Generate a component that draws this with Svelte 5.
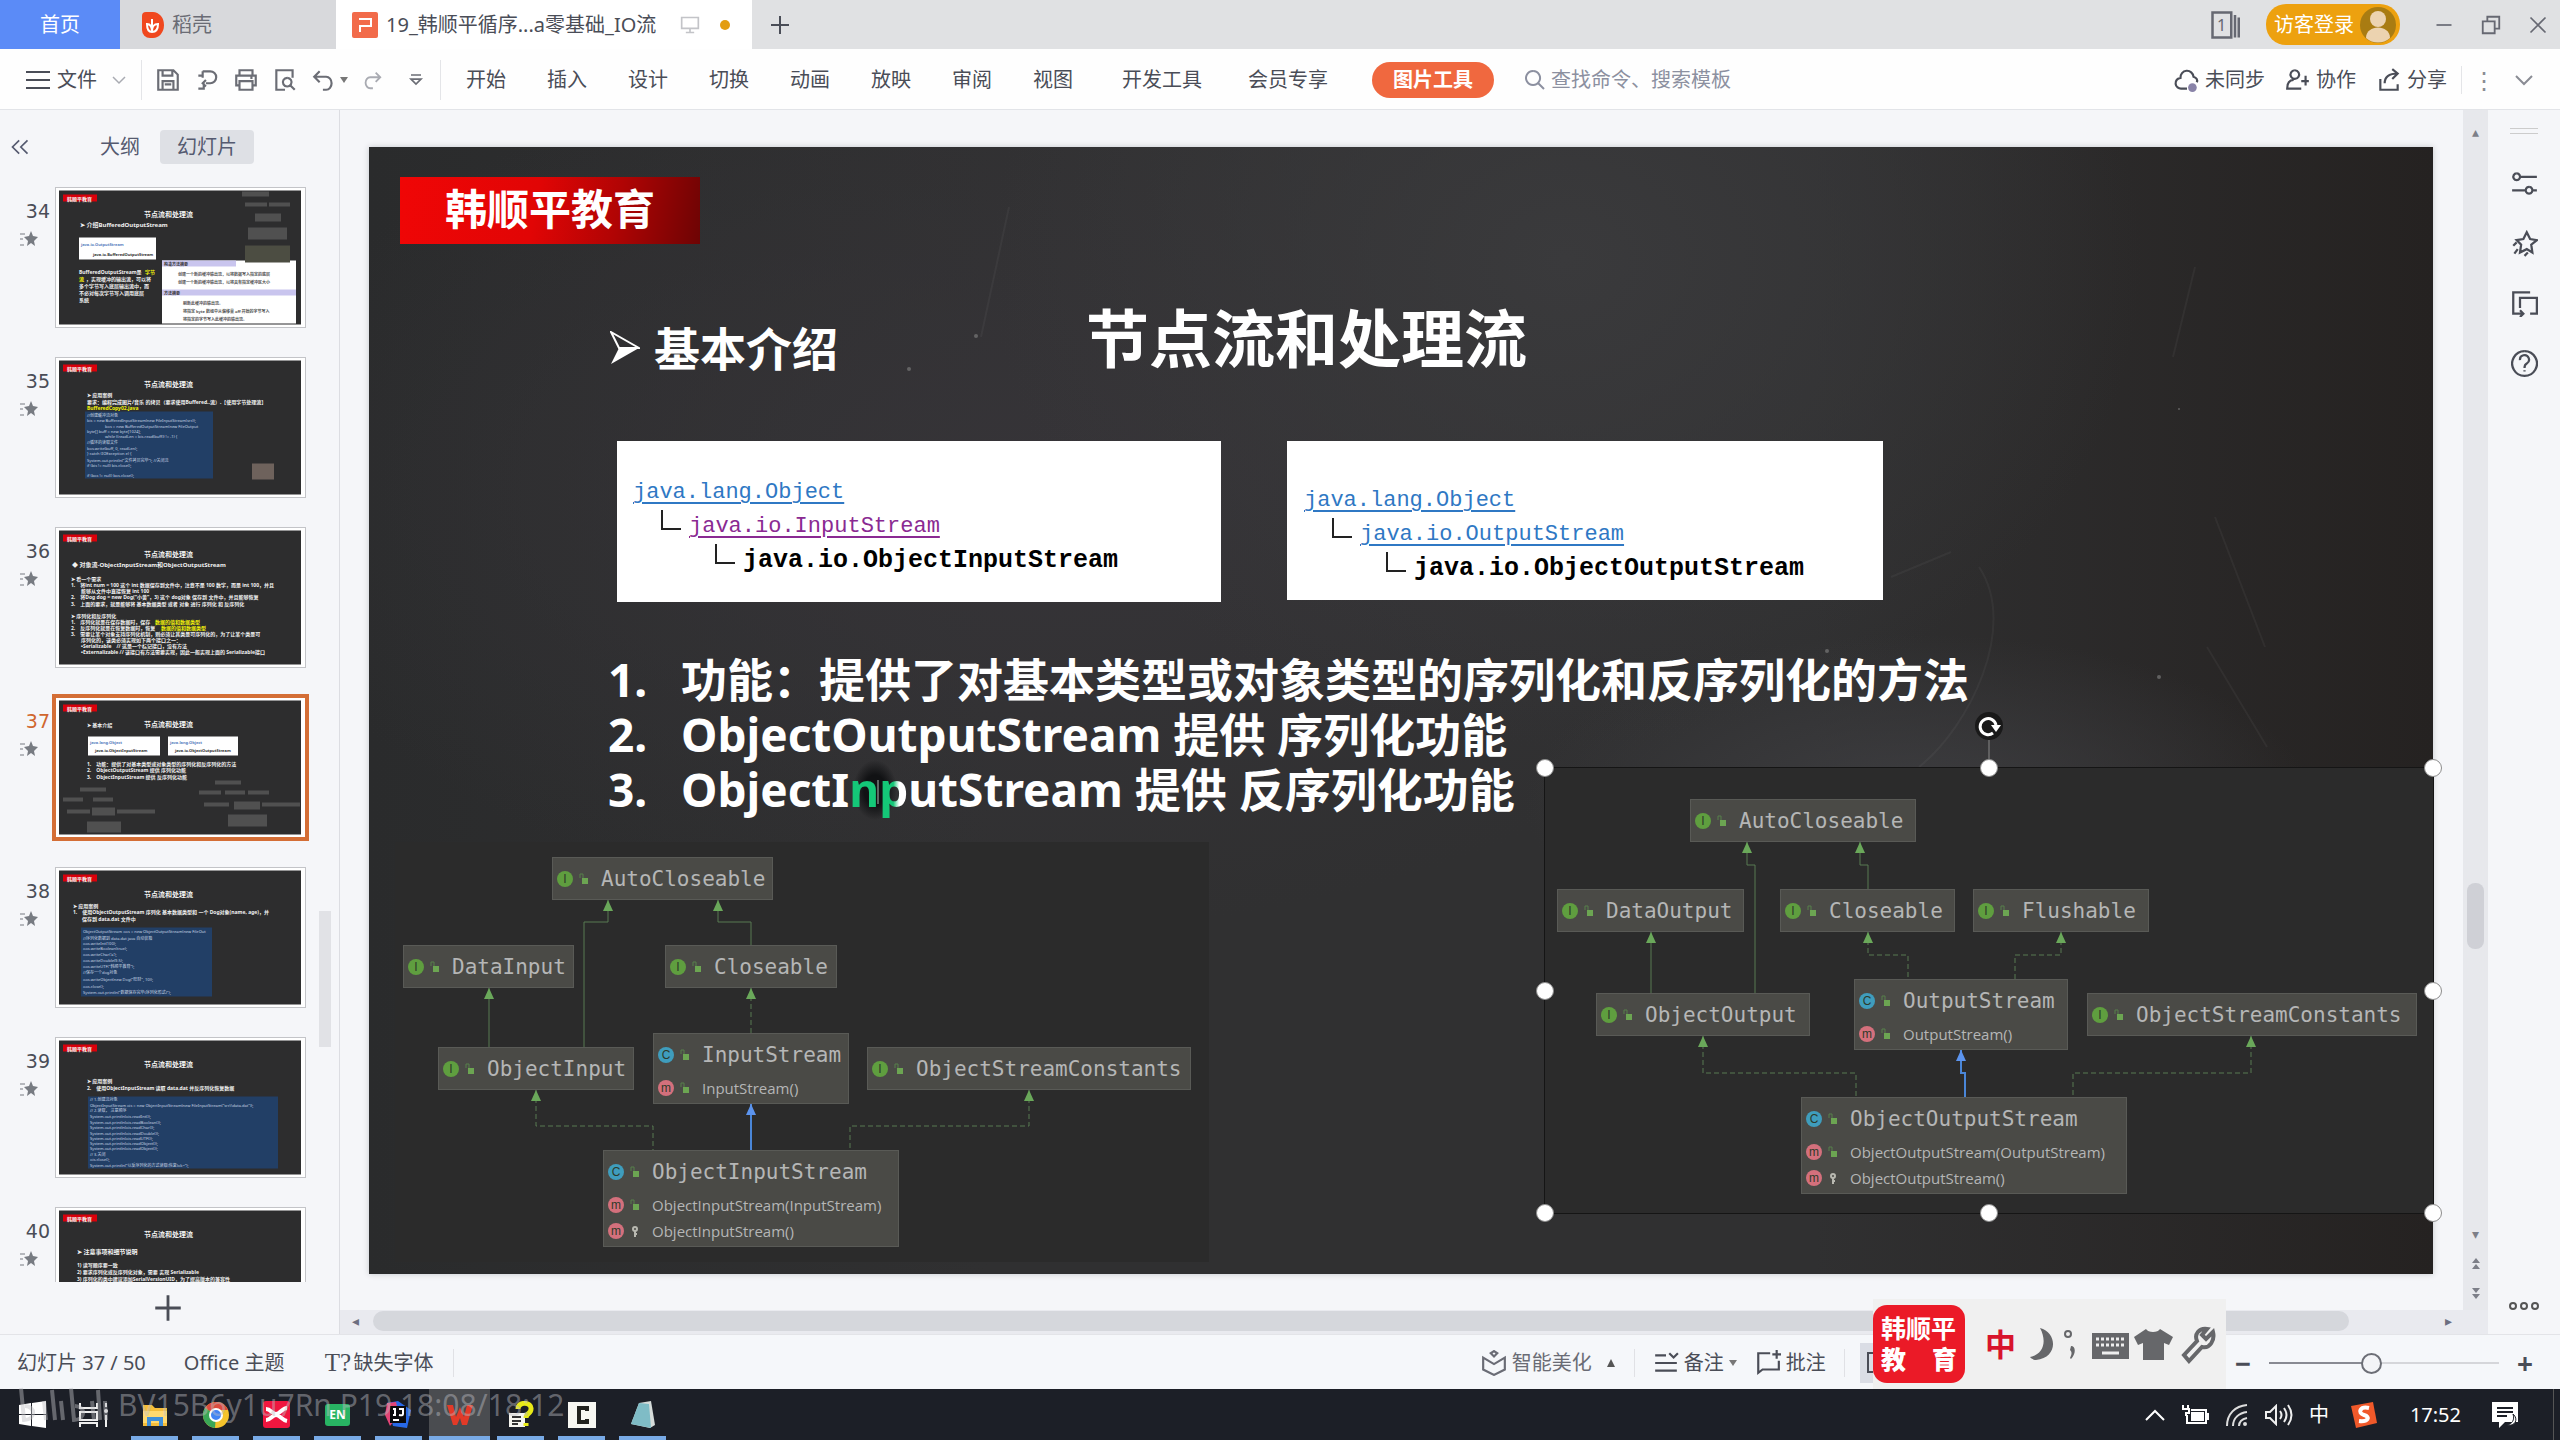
<script lang="ts">
    const menus = ['开始', '插入', '设计', '切换', '动画', '放映', '审阅', '视图'];
    const wideMenus = ['开发工具', '会员专享'];

    // Iconos de línea, rejilla de 24
    const icons: Record<string, string> = {
        save: 'M3 3h14l4 4v14H3zM7 3v5h9V3M7 21v-8h10v8M9 16h6',
        export: 'M8 4h7a5 5 0 0 1 0 11h-4M11 12l-3 3 3 3M8 4v6M4 8h4M4 20h5v-5',
        print: 'M6 8V3h12v5M6 17H3V8h18v9h-3M6 13h12v8H6zM16 10h2',
        preview: 'M12 21H4V3h15v7M21 21l-4-4M14 10a4 4 0 1 0 .1 0',
        undo: 'M8 4L3 9l5 5M3 9h11a5 6 0 0 1 0 12h-3',
        redo: 'M16 4l5 5-5 5M21 9H10a5 6 0 0 0 0 12h3',
        more: 'M6 6h12M6 11l6 6 6-6z',
        chevron: 'M4 8l8 8 8-8',
        search: 'M10 3a7 7 0 1 0 .1 0M15 15l6 6',
        cloud: 'M12 20H7a5 5 0 0 1-1-10 6 6 0 0 1 12-1c3 1 4 3 3 5',
        team: 'M9 3a4 4 0 1 0 .1 0M8 12c-4 0-6 3-6 8h13M19 8v9M15 13h7',
        share: 'M4 11v10h16v-5M8 15c0-6 4-9 12-9M15 2l5 4-5 5',
        monitor: 'M2 3h20v13H2zM12 16v5M7 21h10',
        plus: 'M12 3v18M3 12h18',
        close: 'M3 3l18 18M21 3L3 21',
        minimize: 'M3 12h18',
        restore: 'M3 8h13v13H3zM8 8V3h13v13h-5',
        pages: 'M2 2h15v20H2zM20 4v18M23 6v16',
        collapse: 'M11 4l-8 8 8 8M21 4l-8 8 8 8',
        beautify: 'M12 6l3-3-3-2-3 2zM2 7v11l10 5 10-5V7l-10 6z',
        notes: 'M2 5h10M2 12h20M2 19h20M15 3l4 4 4-4',
        comment: 'M14 3H3v18l4-3h15v-8M20 0v8M16 4h8',
        sliders: 'M5 3a3 3 0 1 0 .1 0M8 6h15M1 18h12M16 15a3 3 0 1 0 .1 0M19 18h4',
        star: 'M14 2l3 6 6 1-5 4 1 7-5-3-6 3 1-7-4-4 6-1zM5 11l-3 3M6 17l-3 4M15 20l-3 3',
        layers: 'M17 2H2v19h9M8 16V7h15v14h-6M8 18l3 3-3 3',
        help: 'M12 1a11 11 0 1 0 .1 0M8 9a4 4 0 1 1 6 3c-2 1-2 2-2 4M12 18v1'
    };

    const rail = ['sliders', 'star', 'layers', 'help'];

    const kinds: Record<string, { letter: string; color: string }> = {
        i: { letter: 'I', color: '#5f9e3f' },
        c: { letter: 'C', color: '#3f9dbd' },
        m: { letter: 'm', color: '#d4707c' }
    };

    // x e y relativos al diagrama
    const inputNodes = [
        { x: 157, y: 15, w: 221, kind: 'i', name: 'AutoCloseable', methods: [] },
        { x: 8, y: 103, w: 171, kind: 'i', name: 'DataInput', methods: [] },
        { x: 270, y: 103, w: 172, kind: 'i', name: 'Closeable', methods: [] },
        { x: 43, y: 205, w: 196, kind: 'i', name: 'ObjectInput', methods: [] },
        { x: 258, y: 191, w: 196, kind: 'c', name: 'InputStream', methods: ['InputStream()'] },
        { x: 472, y: 205, w: 324, kind: 'i', name: 'ObjectStreamConstants', methods: [] },
        { x: 208, y: 308, w: 296, kind: 'c', name: 'ObjectInputStream', methods: ['ObjectInputStream(InputStream)', 'ObjectInputStream()'] }
    ];
    const inputEdges = [
        { d: 'M213 58V80H189V205', kind: 'solid' },
        { d: 'M323 58V80H356V103', kind: 'solid' },
        { d: 'M94 146V205', kind: 'solid' },
        { d: 'M356 146V191', kind: 'dashed' },
        { d: 'M141 248V284H258V308', kind: 'dashed' },
        { d: 'M634 248V284H455V308', kind: 'dashed' },
        { d: 'M356 262V308', kind: 'extends' }
    ];

    const outputNodes = [
        { x: 145, y: 31, w: 226, kind: 'i', name: 'AutoCloseable', methods: [] },
        { x: 12, y: 121, w: 187, kind: 'i', name: 'DataOutput', methods: [] },
        { x: 235, y: 121, w: 175, kind: 'i', name: 'Closeable', methods: [] },
        { x: 428, y: 121, w: 176, kind: 'i', name: 'Flushable', methods: [] },
        { x: 51, y: 225, w: 214, kind: 'i', name: 'ObjectOutput', methods: [] },
        { x: 309, y: 211, w: 214, kind: 'c', name: 'OutputStream', methods: ['OutputStream()'] },
        { x: 542, y: 225, w: 330, kind: 'i', name: 'ObjectStreamConstants', methods: [] },
        { x: 256, y: 329, w: 326, kind: 'c', name: 'ObjectOutputStream', methods: ['ObjectOutputStream(OutputStream)', 'ObjectOutputStream()'] }
    ];
    const outputEdges = [
        { d: 'M202 74V97H210V225', kind: 'solid' },
        { d: 'M315 74V97H323V121', kind: 'solid' },
        { d: 'M106 164V225', kind: 'solid' },
        { d: 'M323 164V187H363V211', kind: 'dashed' },
        { d: 'M516 164V187H470V211', kind: 'dashed' },
        { d: 'M158 268V305H311V329', kind: 'dashed' },
        { d: 'M706 268V305H528V329', kind: 'dashed' },
        { d: 'M416 282V305H420V329', kind: 'extends' }
    ];

    const handles = [
        [0, 0], [50, 0], [100, 0],
        [0, 50], [100, 50],
        [0, 100], [50, 100], [100, 100]
    ];

    type Line = { x: number; y: number; t: string; s?: number; c?: string };
    type Thumb = { n: number; lines: Line[]; panels?: [number, number, number, number, string][]; code?: Line[] };

    const y = '#f2f20a';
    const blue = '#223f66';
    const grey = '#505050';

    const thumbs: Thumb[] = [
        {
            n: 34,
            panels: [
                [20, 47, 77, 22, '#fff'], [103, 70, 134, 63, '#fff'], [103, 70, 74, 6, '#c9c5ee'], [103, 99, 134, 6, '#c9c5ee'],
                [183, 1, 27, 5, grey], [186, 12, 22, 4, grey], [210, 12, 21, 4, grey], [196, 23, 26, 8, grey], [189, 37, 39, 12, grey], [186, 55, 45, 17, '#4c4d42']
            ],
            lines: [
                { x: 21, y: 36, t: '➤ 介绍BufferedOutputStream', s: 6 },
                { x: 22, y: 55, t: 'java.io.OutputStream', s: 4, c: '#5b7fc0' },
                { x: 34, y: 65, t: 'java.io.BufferedOutputStream', s: 4, c: '#333' },
                { x: 20, y: 83, t: 'BufferedOutputStream是', s: 5 },
                { x: 86, y: 83, t: '字节', s: 5, c: y },
                { x: 20, y: 90, t: '流', s: 5, c: y },
                { x: 27, y: 90, t: '，实现缓冲的输出流，可以将', s: 5 },
                { x: 20, y: 97, t: '多个字节写入底层输出流中，而', s: 5 },
                { x: 20, y: 104, t: '不必对每次字节写入调用底层', s: 5 },
                { x: 20, y: 111, t: '系统', s: 5 },
                { x: 105, y: 75, t: '构造方法摘要', s: 4, c: '#333' },
                { x: 119, y: 85, t: '创建一个新的缓冲输出流，以将数据写入指定的底层', s: 4, c: '#555' },
                { x: 119, y: 93, t: '创建一个新的缓冲输出流，以将具有指定缓冲区大小', s: 4, c: '#555' },
                { x: 105, y: 104, t: '方法摘要', s: 4, c: '#333' },
                { x: 124, y: 114, t: '刷新此缓冲的输出流。', s: 4, c: '#555' },
                { x: 124, y: 122, t: '将指定 byte 数组中从偏移量 off 开始的字节写入', s: 4, c: '#555' },
                { x: 124, y: 130, t: '将指定的字节写入此缓冲的输出流。', s: 4, c: '#555' }
            ]
        },
        {
            n: 35,
            panels: [[26, 51, 128, 67, blue], [193, 103, 22, 16, '#6e625c']],
            lines: [
                { x: 28, y: 36, t: '➤ 应用案例', s: 5 },
                { x: 28, y: 43, t: '要求：编程完成图片/音乐 的拷贝（要求使用Buffered..流）.【使用字节处理流】', s: 5 },
                { x: 28, y: 49, t: 'BufferedCopy02.java', s: 5, c: y }
            ],
            code: [
                { x: 28, y: 56, t: '//创建缓冲流对象' },
                { x: 28, y: 61, t: 'bis = new BufferedInputStream(new FileInputStream(src));' },
                { x: 46, y: 67, t: 'bos = new BufferedOutputStream(new FileOutput' },
                { x: 28, y: 72, t: 'byte[] buff = new byte[1024];' },
                { x: 46, y: 77, t: 'while ((readLen = bis.read(buff)) != -1) {' },
                { x: 28, y: 83, t: '//循环的读取文件' },
                { x: 28, y: 89, t: 'bos.write(buff, 0, readLen);' },
                { x: 28, y: 94, t: '} catch (IOException e) {' },
                { x: 28, y: 101, t: 'System.out.println("文件拷贝完毕"); //关闭流' },
                { x: 28, y: 106, t: 'if (bis != null) bis.close();' },
                { x: 28, y: 116, t: 'if (bos != null) bos.close();' }
            ]
        },
        {
            n: 36,
            lines: [
                { x: 13, y: 36, t: '◆ 对象流-ObjectInputStream和ObjectOutputStream', s: 6 },
                { x: 12, y: 50, t: '➤ 看一个需求', s: 5 },
                { x: 12, y: 56, t: '1.　将int num = 100 这个 int 数据保存到文件中，注意不是 100 数字，而是 int 100，并且', s: 5 },
                { x: 22, y: 62, t: '能够从文件中直接恢复 int 100', s: 5 },
                { x: 12, y: 68, t: '2.　将Dog dog = new Dog(“小黄”，3) 这个 dog对象 保存到 文件中，并且能够恢复', s: 5 },
                { x: 12, y: 75, t: '3.　上面的要求，就是能够将 基本数据类型 或者 对象 进行 序列化 和 反序列化', s: 5 },
                { x: 12, y: 87, t: '➤ 序列化和反序列化', s: 5 },
                { x: 12, y: 93, t: '1.　序列化就是在保存数据时，保存', s: 5 },
                { x: 96, y: 93, t: '数据的值和数据类型', s: 5, c: y },
                { x: 12, y: 99, t: '2.　反序列化就是在恢复数据时，恢复', s: 5 },
                { x: 102, y: 99, t: '数据的值和数据类型', s: 5, c: y },
                { x: 12, y: 105, t: '3.　需要让某个对象支持序列化机制，则必须让其类是可序列化的，为了让某个类是可', s: 5 },
                { x: 22, y: 111, t: '序列化的，该类必须实现如下两个接口之一：', s: 5 },
                { x: 22, y: 117, t: '•Serializable　// 这是一个标记接口，没有方法', s: 5 },
                { x: 22, y: 123, t: '•Externalizable // 该接口有方法需要实现，因此一般实现上面的 Serializable接口', s: 5 }
            ]
        },
        {
            n: 37,
            panels: [
                [29, 36, 72, 19, '#fff'], [109, 36, 70, 19, '#fff'],
                [21, 87, 26, 4, grey], [4, 97, 20, 4, grey], [34, 97, 20, 4, grey], [8, 109, 23, 4, grey], [33, 107, 23, 8, grey], [58, 109, 38, 4, grey], [28, 121, 34, 11, grey],
                [156, 80, 26, 4, grey], [140, 90, 22, 4, grey], [166, 90, 20, 4, grey], [189, 90, 21, 4, grey], [145, 102, 25, 4, grey], [175, 101, 26, 8, grey], [203, 102, 38, 4, grey], [169, 114, 39, 12, grey]
            ],
            lines: [
                { x: 28, y: 26, t: '➤ 基本介绍', s: 5 },
                { x: 31, y: 43, t: 'java.lang.Object', s: 4, c: '#5b7fc0' },
                { x: 36, y: 51, t: 'java.io.ObjectInputStream', s: 4, c: '#333' },
                { x: 111, y: 43, t: 'java.lang.Object', s: 4, c: '#5b7fc0' },
                { x: 116, y: 51, t: 'java.io.ObjectOutputStream', s: 4, c: '#333' },
                { x: 28, y: 65, t: '1.　功能：提供了对基本类型或对象类型的序列化和反序列化的方法', s: 5 },
                { x: 28, y: 71, t: '2.　ObjectOutputStream 提供 序列化功能', s: 5 },
                { x: 28, y: 78, t: '3.　ObjectInputStream 提供 反序列化功能', s: 5 }
            ]
        },
        {
            n: 38,
            panels: [[22, 57, 131, 69, blue]],
            lines: [
                { x: 14, y: 37, t: '➤ 应用案例', s: 5 },
                { x: 14, y: 43, t: '1.　使用ObjectOutputStream 序列化 基本数据类型和 一个 Dog对象(name, age)，并', s: 5 },
                { x: 23, y: 50, t: '保存到 data.dat 文件中', s: 5 }
            ],
            code: [
                { x: 24, y: 62, t: 'ObjectOutputStream oos = new ObjectOutputStream(new FileOut' },
                { x: 24, y: 69, t: '//序列化数据到 data.dat   java 自动装箱' },
                { x: 24, y: 74, t: 'oos.writeInt(100);' },
                { x: 24, y: 79, t: 'oos.writeBoolean(true);' },
                { x: 24, y: 85, t: 'oos.writeChar(\'a\');' },
                { x: 24, y: 91, t: 'oos.writeDouble(9.5);' },
                { x: 24, y: 97, t: 'oos.writeUTF("韩顺平教育");' },
                { x: 24, y: 103, t: '//保存一个dog对象' },
                { x: 24, y: 110, t: 'oos.writeObject(new Dog("旺财", 10));' },
                { x: 24, y: 117, t: 'oos.close();' },
                { x: 24, y: 123, t: 'System.out.println("数据保存完毕(序列化形式)");' }
            ]
        },
        {
            n: 39,
            panels: [[29, 56, 190, 72, blue]],
            lines: [
                { x: 28, y: 42, t: '➤ 应用案例', s: 5 },
                { x: 28, y: 49, t: '2.　使用ObjectInputStream 读取 data.dat 并反序列化恢复数据', s: 5 }
            ],
            code: [
                { x: 31, y: 60, t: '// 1.创建流对象' },
                { x: 31, y: 66, t: 'ObjectInputStream ois = new ObjectInputStream(new FileInputStream("src\\\\data.dat"));' },
                { x: 31, y: 71, t: '// 2.读取， 注意顺序' },
                { x: 31, y: 77, t: 'System.out.println(ois.readInt());' },
                { x: 31, y: 83, t: 'System.out.println(ois.readBoolean());' },
                { x: 31, y: 88, t: 'System.out.println(ois.readChar());' },
                { x: 31, y: 94, t: 'System.out.println(ois.readDouble());' },
                { x: 31, y: 99, t: 'System.out.println(ois.readUTF());' },
                { x: 31, y: 104, t: 'System.out.println(ois.readObject());' },
                { x: 31, y: 109, t: 'System.out.println(ois.readObject());' },
                { x: 31, y: 115, t: '// 3.关闭' },
                { x: 31, y: 120, t: 'ois.close();' },
                { x: 31, y: 126, t: 'System.out.println("以反序列化的方式读取(恢复)ok~");' }
            ]
        },
        {
            n: 40,
            lines: [
                { x: 18, y: 43, t: '➤ 注意事项和细节说明', s: 6 },
                { x: 18, y: 56, t: '1)  读写顺序要一致', s: 5 },
                { x: 18, y: 63, t: '2)  要求序列化或反序列化对象，需要 实现 Serializable', s: 5 },
                { x: 18, y: 70, t: '3)  序列化的类中建议添加SerialVersionUID，为了提高版本的兼容性', s: 5 }
            ]
        }
    ];

    let current = $state(37);
    let zoom = $state(44);
</script>

{#snippet icon(name: string, size: number)}
    <svg class="icon" width={size} height={size} viewBox="0 0 24 24" aria-hidden="true"><path d={icons[name]} /></svg>
{/snippet}

{#snippet badge(kind: string)}
    <span class="kind" style="background: {kinds[kind].color}">{kinds[kind].letter}</span>
{/snippet}

{#snippet lock()}
    <svg width="10" height="12" viewBox="0 0 10 12" aria-hidden="true">
        <path d="M1 5V1h3v5" fill="none" stroke="#56804a" />
        <path d="M3 5h6v6H3z" fill="#6ca552" />
    </svg>
{/snippet}

{#snippet key()}
    <svg width="10" height="12" viewBox="0 0 10 12" aria-hidden="true">
        <path d="M5 6v6M5 9h2" fill="none" stroke="#b8b8b0" stroke-width="2" />
        <circle cx="5" cy="4" r="2" fill="none" stroke="#b8b8b0" stroke-width="2" />
    </svg>
{/snippet}

{#snippet diagram(nodes: typeof inputNodes, edges: typeof inputEdges)}
    <svg class="edges" aria-hidden="true">
        <defs>
            <marker id="tip" viewBox="0 0 12 12" refX="6" refY="0" markerWidth="12" markerHeight="12" markerUnits="userSpaceOnUse" orient="0"><path d="M6 0l5 11H1z" fill="#6aa85a" /></marker>
            <marker id="tip-blue" viewBox="0 0 12 12" refX="6" refY="0" markerWidth="12" markerHeight="12" markerUnits="userSpaceOnUse" orient="0"><path d="M6 0l5 11H1z" fill="#5c94ee" /></marker>
        </defs>
        {#each edges as edge}
            <path class={edge.kind} d={edge.d} marker-start={edge.kind === 'extends' ? 'url(#tip-blue)' : 'url(#tip)'} />
        {/each}
    </svg>
    {#each nodes as node}
        <div class="node" style="left: {node.x}px; top: {node.y}px; width: {node.w}px;">
            <div class="node-name">{@render badge(node.kind)}{@render lock()}<span>{node.name}</span></div>
            {#if node.methods.length}
                <div class="methods">
                    {#each node.methods as method, i}
                        <div class="method">
                            {@render badge('m')}
                            {#if i === 0}{@render lock()}{:else}{@render key()}{/if}
                            <span>{method}</span>
                        </div>
                    {/each}
                </div>
            {/if}
        </div>
    {/each}
{/snippet}

<div class="app">
    <header class="tabs">
        <button class="tab home">首页</button>
        <button class="tab docer">
            <svg width="22" height="26" viewBox="0 0 22 26" aria-hidden="true"><path d="M4 0h7a11 13 0 0 1 0 26H8a8 8 0 0 1-8-8V4a4 4 0 0 1 4-4z" fill="#f0481f" /><path d="M10 20V7M10 20c-5 0-5-5-5-8 4 0 5 3 5 8c0-5 1-8 6-8 0 4-1 8-6 8" fill="none" stroke="#fff" stroke-width="2" /></svg>
            稻壳
        </button>
        <button class="tab doc">
            <svg width="26" height="26" viewBox="0 0 26 26" aria-hidden="true"><rect width="26" height="26" rx="2" fill="#f26b4a" /><path d="M7 7h12v7H9M8 13v7" fill="none" stroke="#fff" stroke-width="2" /></svg>
            <span class="doc-name">19_韩顺平循序...a零基础_IO流</span>
            <span class="doc-screen">{@render icon('monitor', 20)}</span>
            <i class="unsaved"></i>
        </button>
        <button class="add" aria-label="新建">{@render icon('plus', 24)}</button>
        <div class="window">
            <button class="pages" aria-label="窗口">{@render icon('pages', 30)}<span>1</span></button>
            <button class="login">
                访客登录
                <svg width="36" height="36" viewBox="0 0 36 36" aria-hidden="true"><circle cx="18" cy="18" r="18" fill="#a97c12" /><circle cx="18" cy="12" r="8" fill="#ecd3b0" /><path d="M6 31c0-14 24-14 24 0a18 18 0 0 1-24 0" fill="#ecd3b0" /></svg>
            </button>
            <button aria-label="最小化">{@render icon('minimize', 20)}</button>
            <button aria-label="还原">{@render icon('restore', 22)}</button>
            <button aria-label="关闭">{@render icon('close', 20)}</button>
        </div>
    </header>

    <nav class="ribbon">
        <button class="file">
            <svg class="icon" width="24" height="18" viewBox="0 0 24 18" aria-hidden="true"><path d="M0 1h24M0 9h24M0 17h24" /></svg>
            文件
            <span class="dim">{@render icon('chevron', 18)}</span>
        </button>
        <div class="quick">
            {#each ['save', 'export', 'print', 'preview', 'undo'] as name}
                <button aria-label={name}>{@render icon(name, 26)}</button>
            {/each}
            <span class="caret"></span>
            <button class="dim" aria-label="redo">{@render icon('redo', 22)}</button>
            <button class="more" aria-label="more">{@render icon('more', 20)}</button>
        </div>
        <div class="menus">
            {#each menus as menu}<button>{menu}</button>{/each}
        </div>
        <div class="menus wide">
            {#each wideMenus as menu}<button>{menu}</button>{/each}
        </div>
        <button class="picture-tools">图片工具</button>
        <label class="search">
            {@render icon('search', 24)}
            <input type="text" placeholder="查找命令、搜索模板" aria-label="查找命令、搜索模板" />
        </label>
        <div class="share">
            <button>
                <svg class="icon" width="26" height="26" viewBox="0 0 24 24" aria-hidden="true"><path d={icons.cloud} /><circle cx="17" cy="19" r="4" fill="#8983a8" stroke="none" /></svg>
                未同步
            </button>
            <button>{@render icon('team', 26)}协作</button>
            <button>{@render icon('share', 26)}分享</button>
            <div class="share-end">
                <button class="dots" aria-label="更多">⋮</button>
                <button aria-label="折叠">{@render icon('chevron', 24)}</button>
            </div>
        </div>
    </nav>

    <main>
        <aside class="panel">
            <div class="panel-head">
                <button aria-label="收起">{@render icon('collapse', 20)}</button>
                <button class="switch outline">大纲</button>
                <button class="switch on">幻灯片</button>
            </div>
            <div class="thumbs">
                {#each thumbs as thumb}
                    <button class="thumb" class:selected={thumb.n === current} onclick={() => (current = thumb.n)}>
                        <span class="num">
                            {thumb.n}
                            <svg width="18" height="16" viewBox="0 0 18 16" aria-hidden="true"><path d="M11 0l2 5 5 1-4 4 1 5-4-3-4 3 1-5-4-4 5-1z" fill="#777b82" /><path d="M0 3h5M0 8h3M0 14h4" stroke="#777b82" /></svg>
                        </span>
                        <span class="frame">
                            <svg class="mini" viewBox="0 0 242 134" aria-hidden="true">
                                <rect width="242" height="134" fill="#2d2d2e" />
                                <path d="M4 4h34v7H4z" fill="#d9000b" />
                                {#each thumb.panels ?? [] as [px, py, pw, ph, fill]}
                                    <rect x={px} y={py} width={pw} height={ph} {fill} />
                                {/each}
                                <text x="8" y="10" font-size="5">韩顺平教育</text>
                                <text x="85" y="26" font-size="7">节点流和处理流</text>
                                {#each thumb.lines as line}
                                    <text x={line.x} y={line.y} font-size={line.s ?? 5} fill={line.c ?? '#f2f2f2'}>{line.t}</text>
                                {/each}
                                {#each thumb.code ?? [] as line}
                                    <text class="code" x={line.x} y={line.y} font-size="4">{line.t}</text>
                                {/each}
                            </svg>
                        </span>
                    </button>
                {/each}
                <i class="panel-scroll"></i>
            </div>
            <button class="add-slide" aria-label="新建幻灯片">{@render icon('plus', 34)}</button>
        </aside>

        <section class="work">
            <div class="work-row">
                <div class="stage">
                    <article class="slide">
                        <svg class="chalk" preserveAspectRatio="none" viewBox="0 0 2064 1127" aria-hidden="true">
                            <path d="M1826 120l-22 90M1846 370l50 130M1838 500l60 100M1522 430l60-25M1910 700l60-40M640 60l-28 130M1610 420c40 60-10 160-60 200M1380 760l80 20M1500 810l-50 60" />
                            <circle cx="607" cy="189" r="2" /><circle cx="540" cy="222" r="2" /><circle cx="1810" cy="262" r="1" /><circle cx="1458" cy="504" r="2" /><circle cx="1790" cy="530" r="2" />
                        </svg>
                        <div class="brand">韩顺平教育</div>
                        <div class="headings">
                            <h2>
                                <svg width="30" height="34" viewBox="0 0 30 34" aria-hidden="true"><path d="M1 1l28 16H9z" fill="none" stroke="#fff" stroke-width="2" /><path d="M9 17h20L1 33z" fill="#fff" /></svg>
                                基本介绍
                            </h2>
                            <h1>节点流和处理流</h1>
                        </div>
                        <div class="trees">
                            <div class="tree">
                                <div><a href="#object">java.lang.Object</a></div>
                                <div class="level1"><i class="corner"></i><a class="visited" href="#input">java.io.InputStream</a></div>
                                <div class="level2"><i class="corner"></i><b>java.io.ObjectInputStream</b></div>
                            </div>
                            <div class="tree second">
                                <div><a href="#object">java.lang.Object</a></div>
                                <div class="level1"><i class="corner"></i><a href="#output">java.io.OutputStream</a></div>
                                <div class="level2"><i class="corner"></i><b>java.io.ObjectOutputStream</b></div>
                            </div>
                        </div>
                        <ol>
                            <li><span>1.</span>功能：提供了对基本类型或对象类型的序列化和反序列化的方法</li>
                            <li><span>2.</span>ObjectOutputStream 提供 序列化功能</li>
                            <li><span>3.</span>ObjectI<em>np</em>utStream 提供 反序列化功能</li>
                        </ol>
                        <div class="diagram input">{@render diagram(inputNodes, inputEdges)}</div>
                        <div class="diagram output">
                            {@render diagram(outputNodes, outputEdges)}
                            <svg class="rotate" width="32" height="60" viewBox="0 0 32 60" aria-hidden="true"><circle cx="16" cy="18" r="14" fill="#191919" /><path d="M16 32v28" stroke="#888" /><path d="M20 25a8 8 0 1 1 3-8" fill="none" stroke="#fff" stroke-width="3" /><path d="M18 17h10l-5 7z" fill="#fff" /></svg>
                            {#each handles as [hx, hy]}
                                <i class="handle" style="left: {hx}%; top: {hy}%;"></i>
                            {/each}
                        </div>
                    </article>
                </div>
                <div class="vscroll">
                    <span>▴</span>
                    <i></i>
                    <span class="down">▾</span>
                    <svg width="10" height="12" viewBox="0 0 10 12" fill="#7d7f88" aria-hidden="true"><path d="M5 0l4 5H1zM5 6l4 5H1z" /></svg>
                    <svg width="10" height="12" viewBox="0 0 10 12" fill="#7d7f88" aria-hidden="true"><path d="M1 0h8L5 5zM1 6h8l-4 5z" /></svg>
                </div>
            </div>
            <div class="hscroll"><span>◂</span><i></i><span>▸</span></div>
        </section>

        <aside class="rail">
            <i class="grip"></i>
            {#each rail as name}
                <button aria-label={name}>{@render icon(name, 27)}</button>
            {/each}
            <button class="rail-more" aria-label="更多"><i></i><i></i><i></i></button>
        </aside>
    </main>

    <footer class="status">
        <span>幻灯片 37 / 50</span>
        <span class="theme">Office 主题</span>
        <button class="fonts"><span class="serif">T?</span>缺失字体</button>
        <div class="status-right">
            <button class="beautify">{@render icon('beautify', 26)}智能美化 <span class="caret up"></span></button>
            <button>{@render icon('notes', 26)}备注<span class="caret"></span></button>
            <button class="comments">{@render icon('comment', 26)}批注</button>
            <button class="view" aria-label="普通视图">{@render icon('layers', 24)}</button>
            <span class="zoom-sign">−</span>
            <input type="range" min="0" max="100" bind:value={zoom} aria-label="缩放" />
            <span class="zoom-sign">+</span>
        </div>
        <div class="ime">
            <div class="ime-logo"><span>韩顺平</span><span class="spread"><b>教</b><b>育</b></span></div>
            <span class="ime-mode">中</span>
            <svg width="196" height="40" viewBox="0 0 196 40" fill="#66676a" aria-hidden="true">
                <path d="M10 4c18 5 18 30-4 32-3 0-5-2-6-3 14-3 17-16 10-29z" />
                <circle cx="38" cy="10" r="3" fill="none" stroke="#66676a" stroke-width="2" /><path d="M41 22c5 0 5 8 0 13l-1-1c2-4 2-6 0-8z" />
                <path d="M62 9h37v26H62z" />
                <path d="M66 15h29M66 21h29" stroke="#eee" stroke-width="3" stroke-dasharray="3 2" /><path d="M72 29h17" stroke="#eee" stroke-width="3" />
                <path d="M116 5c2 4 12 4 14 0l13 8-4 8-5-2v17h-21V19l-5 2-4-8z" />
                <path d="M183 8l-7 7-4-4 5-6c-8-1-13 5-10 12l-13 14 5 6 13-14c8 2 13-7 11-15z" fill="none" stroke="#66676a" stroke-width="4" />
            </svg>
        </div>
    </footer>

    <div class="taskbar">
        <button class="app-btn plain" aria-label="开始"><svg width="27" height="27" viewBox="0 0 27 27" aria-hidden="true"><path d="M0 4l12-2v11H0zM13 2l14-2v13H13zM0 14h12v11L0 23zM13 14h14v13l-14-2z" fill="#fff" /></svg></button>
        <button class="app-btn plain" aria-label="任务视图"><svg width="30" height="26" viewBox="0 0 30 26" fill="none" stroke="#eee" stroke-width="2" aria-hidden="true"><path d="M1 1v5h17V1M1 10h17v8H1zM1 25v-4h17v4M27 1v4M27 13v12" /><circle cx="27" cy="9" r="1" /></svg></button>
        <button class="app-btn" aria-label="文件资源管理器"><svg width="26" height="26" viewBox="0 0 26 26" aria-hidden="true"><path d="M1 3h9l3 3h12v18H1z" fill="#f5bd3a" /><path d="M1 9h24v12H1z" fill="#ffd970" /><path d="M5 24v-9h16v9h-4v-5H9v5z" fill="#3f8fda" /></svg></button>
        <button class="app-btn" aria-label="Chrome"><svg width="28" height="28" viewBox="0 0 28 28" aria-hidden="true"><circle cx="14" cy="14" r="13" fill="#f5c32c" /><path d="M14 14L3 7a13 13 0 0 1 23 2H14z" fill="#dd4b3e" /><path d="M14 14l-1 13A13 13 0 0 1 3 7z" fill="#3aa757" /><circle cx="14" cy="14" r="6" fill="#4285f4" stroke="#fff" stroke-width="2" /></svg></button>
        <button class="app-btn" aria-label="XMind"><svg width="27" height="27" viewBox="0 0 27 27" aria-hidden="true"><rect width="27" height="27" rx="3" fill="#f0163f" /><path d="M3 8c5 0 6 5 10 5s6-6 11-6M3 19c5 0 6-5 10-5s6 5 11 6" fill="none" stroke="#fff" stroke-width="4" /></svg></button>
        <button class="app-btn" aria-label="EN"><span class="en">EN</span></button>
        <button class="app-btn" aria-label="IntelliJ IDEA"><svg width="27" height="27" viewBox="0 0 27 27" aria-hidden="true"><path d="M2 2l11-2 13 9-4 18-14-2z" fill="#2869e8" /><path d="M2 2l9-1 3 13-9 11-5-11z" fill="#e34476" /><rect x="5" y="5" width="16" height="17" fill="#0a0a0d" /><path d="M8 8h3M10 8v6M8 14h3M14 8h4v5q0 2-4 1M8 19h6" fill="none" stroke="#fff" stroke-width="2" /></svg></button>
        <button class="app-btn active" aria-label="WPS"><svg width="26" height="24" viewBox="0 0 26 24" aria-hidden="true"><path d="M0 2h6l3 12 4-10 4 10 3-12h6l-6 20h-5l-2-7-3 7H6z" fill="#e23a28" /></svg></button>
        <button class="app-btn" aria-label="帮助"><svg width="26" height="28" viewBox="0 0 26 28" aria-hidden="true"><path d="M1 12h16v14H1z" fill="#f5f5f0" /><path d="M4 16h9M4 20h9M4 23h6" stroke="#333" stroke-width="2" /><path d="M10 8c0-8 14-7 13 0 0 5-5 4-5 9M18 22v3" fill="none" stroke="#e8ea18" stroke-width="5" /></svg></button>
        <button class="app-btn" aria-label="Camtasia"><svg width="28" height="26" viewBox="0 0 28 26" aria-hidden="true"><rect width="28" height="26" fill="#f7f7f2" /><path d="M19 9V6h-8v14h8v-3" fill="none" stroke="#23231f" stroke-width="4" /></svg></button>
        <button class="app-btn" aria-label="记事本"><svg width="26" height="27" viewBox="0 0 26 27" aria-hidden="true"><path d="M9 2l12-2 4 24-5 3-19-4z" fill="#d6dcda" /><path d="M9 2l10 1 2 24L1 23z" fill="#7fbcc6" /></svg></button>
        <div class="tray">
            <svg class="icon" width="20" height="12" viewBox="0 0 20 12" aria-hidden="true"><path d="M1 11l9-9 9 9" /></svg>
            <svg width="28" height="22" viewBox="0 0 28 22" fill="none" stroke="#fff" stroke-width="2" aria-hidden="true"><path d="M10 6h15v13H6v-8M27 9v7M2 1v4M7 1v4M1 5h7v4H5v3" /><path d="M11 9h11v7H11z" fill="#fff" /></svg>
            <svg width="24" height="24" viewBox="0 0 24 24" fill="none" stroke="#ddd" stroke-width="2" aria-hidden="true"><path d="M2 23C2 11 10 3 22 2M8 23c0-8 6-13 14-14M14 23c0-5 3-7 8-8" /><circle cx="20" cy="21" r="1" /></svg>
            <svg width="28" height="22" viewBox="0 0 28 22" fill="none" stroke="#eee" stroke-width="2" aria-hidden="true"><path d="M1 8h4l6-6v18l-6-6H1zM15 7q3 4 0 8M19 4q5 7 0 14M23 1q7 10 0 20" /></svg>
            <span class="lang">中</span>
            <svg width="28" height="26" viewBox="0 0 28 26" aria-hidden="true"><path d="M1 4l22-4 4 21-21 5z" fill="#f0592a" /><path d="M19 6c-9-2-12 5-5 7s4 7-5 6" fill="none" stroke="#fff" stroke-width="4" /></svg>
            <span class="clock">17:52</span>
            <svg width="30" height="28" viewBox="0 0 30 28" aria-hidden="true"><path d="M1 1h26v20H14l-6 6v-6H1z" fill="#fff" /><path d="M6 7h16M6 11h16M6 15h10" stroke="#1c1f27" stroke-width="2" /><path d="M22 13c6 5 2 13-6 11 5-1 8-5 6-11z" fill="#fff" stroke="#1c1f27" /></svg>
        </div>
        <div class="watermark">
            <svg width="90" height="36" viewBox="0 0 90 36" fill="none" stroke="currentColor" stroke-width="4" aria-hidden="true"><path d="M3 1l3 32c12 0 12-14 1-14M26 14l2 19M34 3l3 30M43 14l2 19M53 1l3 32c12 0 12-14 1-14M74 14l2 19M80 3l2 30M87 14l1 19" /></svg>
            <span>BV15B6y1u7Rn P19 18:08/18:12</span>
        </div>
    </div>
</div>

<style>
    :global(body) {
        margin: 0;
    }

    .app {
        display: flex;
        flex-direction: column;
        height: 100vh;
        font-family: 'Noto Sans', 'Noto Sans CJK SC', sans-serif;
        font-size: 20px;
        line-height: 28px;
        color: #4a4d57;
        background: #f5f6f9;
        overflow: hidden;
    }

    button {
        display: flex;
        align-items: center;
        padding: 0;
        border: none;
        background: none;
        font: inherit;
        color: inherit;
        white-space: nowrap;
        cursor: pointer;
    }

    .icon {
        flex: none;
        fill: none;
        stroke: currentColor;
        stroke-width: 2;
    }

    .dim {
        color: #a9abb2;
        display: flex;
    }

    .caret {
        border: 4px solid transparent;
        border-top: 6px solid #777;
        border-bottom: none;
    }

    .caret.up {
        border-top: none;
        border-bottom: 8px solid #555;
    }

    /* pestañas */
    .tabs {
        display: flex;
        flex: none;
        height: 49px;
        background: #e0e1e3;
    }

    .home {
        justify-content: center;
        width: 120px;
        background: #5b8bf7;
        color: #fff;
    }

    .docer {
        gap: 8px;
        width: 216px;
        padding-left: 22px;
        background: #d8d9dc;
        color: #6a6c75;
    }

    .doc {
        gap: 8px;
        width: 416px;
        padding: 0 16px;
        background: #fff;
    }

    .doc-screen {
        display: flex;
        margin-left: 16px;
        color: #c3c4c8;
    }

    .unsaved {
        width: 10px;
        height: 10px;
        margin-left: 12px;
        border-radius: 50%;
        background: #e39d12;
    }

    .add {
        margin-left: 16px;
    }

    .window {
        display: flex;
        align-items: center;
        gap: 26px;
        margin-left: auto;
        padding-right: 12px;
        color: #666872;
    }

    .pages {
        position: relative;
        color: #666872;
    }

    .pages span {
        position: absolute;
        left: 7px;
        font-size: 16px;
    }

    .login {
        gap: 6px;
        height: 41px;
        padding: 0 4px 0 8px;
        margin-right: 8px;
        border-radius: 20px;
        background: #eda10f;
        color: #fff;
    }

    /* cinta */
    .ribbon {
        display: flex;
        flex: none;
        align-items: center;
        box-sizing: border-box;
        height: 61px;
        padding: 2px 24px 0 26px;
        background: #fefefe;
        border-bottom: 1px solid #e2e4e8;
    }

    .file {
        gap: 7px;
    }

    .file .dim {
        margin-left: 6px;
    }

    .quick {
        display: flex;
        align-items: center;
        gap: 13px;
        height: 40px;
        margin-left: 13px;
        padding: 0 14px 0 13px;
        border-left: 1px solid #e4e5e8;
        border-right: 1px solid #e4e5e8;
        color: #6b6d75;
    }

    .quick .caret {
        margin-left: -10px;
    }

    .more {
        margin-left: 10px;
    }

    .menus {
        display: flex;
        gap: 41px;
        margin-left: 25px;
    }

    .wide {
        gap: 46px;
        margin-left: 49px;
    }

    .picture-tools {
        height: 36px;
        margin-left: 44px;
        padding: 0 21px;
        border-radius: 18px;
        background: #f0683f;
        color: #fff;
        font-weight: 600;
    }

    .search {
        display: flex;
        align-items: center;
        flex: 1;
        gap: 4px;
        margin-left: 29px;
        color: #8c90a0;
    }

    .search input {
        flex: 1;
        min-width: 0;
        padding: 0;
        border: none;
        outline: none;
        background: none;
        font: inherit;
    }

    .search input::placeholder {
        color: #8c90a0;
        opacity: 1;
    }

    .share {
        display: flex;
        align-items: center;
        gap: 20px;
    }

    .share button {
        gap: 5px;
    }

    .share-end {
        display: flex;
        gap: 6px;
        margin-left: -6px;
        border-left: 1px solid #e4e5e8;
        color: #8a8c94;
    }

    .share-end .dots {
        width: 44px;
        justify-content: center;
        font-size: 24px;
    }

    main {
        display: flex;
        flex: 1;
        min-height: 0;
    }

    /* miniaturas */
    .panel {
        display: flex;
        flex-direction: column;
        flex: none;
        width: 339px;
        border-right: 1px solid #dcdde2;
    }

    .panel-head {
        display: flex;
        align-items: center;
        flex: none;
        height: 74px;
        padding-left: 10px;
        color: #555a70;
    }

    .switch {
        height: 34px;
        padding: 0 17px;
        border-radius: 4px;
    }

    .outline {
        margin-left: 53px;
    }

    .on {
        margin-left: 3px;
        background: #dee0e5;
    }

    .thumbs {
        position: relative;
        display: flex;
        flex-direction: column;
        flex: 1;
        gap: 22px;
        min-height: 0;
        overflow: hidden;
    }

    .thumb {
        flex: none;
        align-items: flex-start;
        height: 148px;
    }

    .num {
        display: flex;
        flex-direction: column;
        align-items: flex-end;
        gap: 6px;
        width: 50px;
        padding-top: 13px;
        font-family: 'DejaVu Sans', sans-serif;
        font-size: 19px;
    }

    .num svg {
        margin-right: 12px;
    }

    .frame {
        display: flex;
        box-sizing: border-box;
        width: 251px;
        height: 141px;
        margin: 3px 5px;
        padding: 2px 4px 2px 3px;
        border: 1px solid #c3c4c8;
        background: #fff;
    }

    .selected {
        color: #d0662f;
    }

    .selected .frame {
        width: 257px;
        height: 147px;
        margin: 0 2px;
        padding: 2px 4px 2px 3px;
        border: 4px solid #d46e36;
    }

    .mini {
        flex: 1;
        min-width: 0;
        font-family: 'Noto Sans', 'Noto Sans CJK SC', sans-serif;
        font-weight: bold;
        fill: #f2f2f2;
    }

    .mini .code {
        font-weight: normal;
        fill: #c9d6e4;
    }

    .panel-scroll {
        position: absolute;
        right: 8px;
        top: 727px;
        width: 12px;
        height: 136px;
        background: #e1e2e6;
    }

    .add-slide {
        flex: none;
        justify-content: center;
        height: 52px;
        padding-right: 4px;
    }

    /* lienzo */
    .work {
        display: flex;
        flex-direction: column;
        flex: 1;
        min-width: 0;
    }

    .work-row {
        display: flex;
        flex: 1;
        min-height: 0;
    }

    .stage {
        display: flex;
        flex: 1;
        min-width: 0;
        padding: 37px 30px 36px 29px;
    }

    .slide {
        position: relative;
        flex: 1;
        min-width: 0;
        color: #fff;
        background:
            radial-gradient(ellipse at 58% 10%, #3a3a3c 0%, transparent 34%),
            radial-gradient(ellipse at 75% 58%, #3d3d40 0%, transparent 18%),
            radial-gradient(ellipse at 32% 30%, #363438 0%, transparent 40%),
            linear-gradient(90deg, #2a2b2c 0%, #303031 30%, #303031 70%, #252221 100%);
        box-shadow: 0 0 6px #c4c6ca;
    }

    .chalk {
        position: absolute;
        width: 100%;
        height: 100%;
        fill: #777;
        fill-opacity: 0.7;
    }

    .chalk path {
        fill: none;
        stroke: #aaa;
        stroke-opacity: 0.07;
        stroke-width: 2;
    }

    .brand,
    .headings,
    .trees,
    .slide ol {
        position: relative;
    }

    .brand {
        display: inline-block;
        margin: 30px 0 0 31px;
        padding: 0 45px 4px;
        font-size: 42px;
        font-weight: bold;
        line-height: 63px;
        background: linear-gradient(100deg, #f00606 0%, #e10505 45%, #b00404 72%, #6d0404 100%);
    }

    .headings {
        display: flex;
        align-items: flex-end;
        gap: 248px;
        margin-top: 54px;
        padding-left: 241px;
    }

    h1,
    h2 {
        margin: 0;
        font-weight: bold;
    }

    h1 {
        font-size: 63px;
        line-height: 80px;
    }

    h2 {
        display: flex;
        align-items: center;
        gap: 14px;
        font-size: 46px;
        line-height: 60px;
    }

    .trees {
        display: flex;
        align-items: flex-start;
        gap: 66px;
        margin-top: 63px;
        padding-left: 248px;
    }

    .tree {
        box-sizing: border-box;
        width: 604px;
        height: 161px;
        padding: 35px 16px 0;
        background: #fff;
        color: #000;
        font-family: 'Liberation Mono', monospace;
        font-size: 22px;
        line-height: 34px;
    }

    .tree.second {
        width: 596px;
        height: 159px;
        padding: 43px 17px 0;
    }

    .tree > div {
        display: flex;
        height: 34px;
    }

    .tree a {
        color: #2f78c4;
        text-underline-offset: 4px;
    }

    .tree .visited {
        color: #8a2a92;
    }

    .tree b {
        font-size: 25px;
    }

    .tree .level1 {
        padding-left: 28px;
    }

    .tree .level2 {
        padding-left: 82px;
    }

    .corner {
        width: 18px;
        height: 18px;
        margin-right: 8px;
        border-left: 2px solid #222;
        border-bottom: 2px solid #222;
    }

    .slide ol {
        z-index: 0;
        margin: 50px 0 0;
        padding: 0 0 0 239px;
        list-style: none;
        font-size: 46px;
        font-weight: bold;
        line-height: 55px;
    }

    li {
        white-space: pre;
    }

    li span {
        display: inline-block;
        width: 73px;
    }

    em {
        position: relative;
        font-style: normal;
        color: transparent;
        background: linear-gradient(90deg, #14c878 75%, #fff 85%) text;
    }

    /* halo oscuro y cursor de texto */
    em::before {
        content: '';
        position: absolute;
        z-index: -1;
        left: 4px;
        top: 2px;
        width: 44px;
        height: 60px;
        border-radius: 50%;
        background: radial-gradient(closest-side, #111214 50%, transparent);
    }

    em::after {
        content: '';
        position: absolute;
        left: 28px;
        top: 22px;
        width: 2px;
        height: 24px;
        background: #5f6664;
    }

    /* diagramas de clases */
    .diagram {
        position: absolute;
        background: #2b2b2b;
        color: #b5b6b6;
    }

    .diagram.input {
        left: 26px;
        bottom: 12px;
        width: 814px;
        height: 420px;
    }

    .diagram.output {
        right: 0;
        bottom: 61px;
        width: 888px;
        height: 445px;
        outline: 1px solid #151515;
    }

    .edges {
        position: absolute;
        width: 100%;
        height: 100%;
        fill: none;
        stroke: #587a52;
    }

    .dashed {
        stroke-dasharray: 5 3;
    }

    .extends {
        stroke: #4a86d8;
        stroke-width: 2;
    }

    .edges marker {
        stroke: none;
    }

    .node {
        position: absolute;
        box-sizing: border-box;
        border: 1px solid #595a56;
        background: #4a4a46;
    }

    .node-name,
    .method {
        display: flex;
        align-items: center;
        gap: 6px;
        padding-left: 4px;
        white-space: nowrap;
    }

    .node-name {
        height: 41px;
        font-family: 'DejaVu Sans Mono', monospace;
        font-size: 21px;
    }

    .node-name span:last-child,
    .method span:last-child {
        margin-left: 6px;
    }

    .methods {
        padding-bottom: 2px;
    }

    .method {
        height: 26px;
        font-family: 'Open Sans', sans-serif;
        font-size: 15px;
    }

    .kind {
        width: 16px;
        height: 16px;
        border-radius: 50%;
        color: #2d3a2a;
        font-family: 'Liberation Sans', sans-serif;
        font-size: 12px;
        line-height: 16px;
        text-align: center;
    }

    .handle {
        position: absolute;
        width: 16px;
        height: 16px;
        margin: -9px;
        border: 1px solid #8c8c8c;
        border-radius: 50%;
        background: #fff;
    }

    .rotate {
        position: absolute;
        left: calc(50% - 16px);
        top: -60px;
    }

    .vscroll {
        display: flex;
        flex-direction: column;
        align-items: center;
        width: 25px;
        padding: 8px 0 10px;
        box-sizing: border-box;
        background: #e7e8ec;
        color: #7d7f88;
        font-family: 'DejaVu Sans', sans-serif;
        font-size: 14px;
    }

    .vscroll i {
        width: 17px;
        height: 66px;
        margin-top: 737px;
        border-radius: 8px;
        background: #cfd0d6;
    }

    .vscroll svg {
        margin-top: 18px;
    }

    .vscroll .down {
        margin-top: auto;
        margin-bottom: -8px;
    }

    .hscroll {
        display: flex;
        align-items: center;
        box-sizing: border-box;
        flex: none;
        height: 24px;
        padding: 0 36px 3px 12px;
        background: #e9eaef;
        color: #6c6f80;
        font-family: 'DejaVu Sans', sans-serif;
        font-size: 14px;
    }

    .hscroll i {
        flex: 1;
        height: 20px;
        margin: 0 96px 0 14px;
        border-radius: 10px;
        background: #d5d7dc;
    }

    .rail {
        display: flex;
        flex-direction: column;
        align-items: center;
        flex: none;
        gap: 33px;
        width: 72px;
        box-sizing: border-box;
        padding: 18px 0 24px;
    }

    .grip {
        width: 28px;
        height: 4px;
        margin-bottom: 3px;
        border-top: 1px solid #ccc;
        border-bottom: 1px solid #ccc;
    }

    .rail-more {
        gap: 3px;
        margin-top: auto;
    }

    .rail-more i {
        width: 4px;
        height: 4px;
        border: 2px solid #555;
        border-radius: 50%;
    }

    /* barra de estado */
    .status {
        position: relative;
        display: flex;
        align-items: center;
        flex: none;
        height: 55px;
        box-sizing: border-box;
        padding: 2px 27px 0 17px;
        border-top: 1px solid #e3e4e8;
        background: #f5f7fa;
    }

    .theme {
        margin-left: 38px;
    }

    .fonts {
        margin-left: 38px;
        padding-right: 20px;
        border-right: 1px solid #e0e1e5;
    }

    .serif {
        width: 31px;
        font-family: 'Liberation Serif', serif;
        font-size: 25px;
    }

    .status-right {
        display: flex;
        align-items: center;
        gap: 18px;
        margin-left: auto;
    }

    .status-right button {
        gap: 5px;
    }

    .status-right .beautify {
        padding-right: 19px;
        border-right: 1px solid #e0e1e5;
        color: #6a6c75;
    }

    .beautify .caret {
        margin-left: 10px;
    }

    .status-right .comments {
        padding-right: 18px;
        border-right: 1px solid #e0e1e5;
    }

    .status-right .view {
        height: 40px;
        padding: 0 6px;
        margin: 0 321px 0 -3px;
        background: #dadde5;
    }

    .zoom-sign {
        font-size: 28px;
        font-weight: bold;
    }

    input[type='range'] {
        appearance: none;
        width: 230px;
        height: 24px;
        margin: 0;
        background: linear-gradient(90deg, #888a92 45%, #d5d6da 45%) center / 100% 2px no-repeat;
    }

    input[type='range']::-webkit-slider-thumb {
        appearance: none;
        width: 21px;
        height: 21px;
        border: 2px solid #6c6e76;
        border-radius: 50%;
        background: #f3f4f7;
    }

    .ime {
        position: absolute;
        right: 334px;
        bottom: 0;
        display: flex;
        align-items: center;
        gap: 14px;
        height: 90px;
        background: #f0f0f0;
    }

    .ime-logo {
        display: flex;
        flex-direction: column;
        width: 76px;
        padding: 8px;
        border-radius: 14px;
        background: #eb1a27;
        color: #fff;
        font-size: 25px;
        font-weight: bold;
        line-height: 31px;
    }

    .spread {
        display: flex;
        justify-content: space-between;
    }

    .ime-mode {
        padding-left: 6px;
        color: #d8142c;
        font-size: 31px;
        font-weight: bold;
    }

    /* barra de tareas */
    .taskbar {
        position: relative;
        display: flex;
        flex: none;
        box-sizing: border-box;
        height: 51px;
        padding-left: 2px;
        background: #1c1f27;
        color: #fff;
    }

    .app-btn {
        box-sizing: border-box;
        justify-content: center;
        width: 47px;
        margin: 0 7px;
        border-top: 4px solid transparent;
        border-bottom: 4px solid #78aae6;
    }

    .app-btn.plain {
        border-bottom-color: transparent;
    }

    .app-btn.active {
        width: 61px;
        margin: 0;
        background: #4a4c50;
    }

    .en {
        padding: 0 4px;
        border-radius: 3px;
        background: #28b463;
        font-size: 12px;
        font-weight: bold;
        line-height: 22px;
    }

    .tray {
        display: flex;
        align-items: center;
        gap: 16px;
        margin: 0 6px 0 auto;
        padding-right: 32px;
        border-right: 1px solid #555;
    }

    .lang {
        margin-right: 5px;
    }

    .clock {
        margin: 0 14px 0 16px;
    }

    .watermark {
        position: absolute;
        left: 18px;
        top: -8px;
        display: flex;
        align-items: center;
        gap: 10px;
        color: rgba(190, 190, 195, 0.45);
        font-size: 30px;
        line-height: 48px;
        pointer-events: none;
    }
</style>
